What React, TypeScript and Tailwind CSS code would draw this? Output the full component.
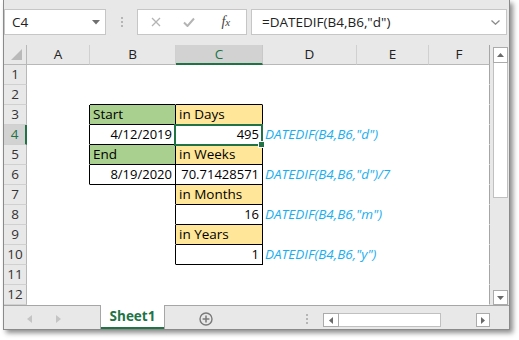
import React from "react";

type C = {
  t?: string;
  r?: boolean;
  b?: boolean;
  bg?: string;
  kind?: "l" | "n" | "f";
  sel?: boolean;
};

const colW = ["w-[63px]", "w-[86px]", "w-[87px]", "w-[94px]", "w-[72px]", "w-[61px]"];
const colNames = ["A", "B", "C", "D", "E", "F"];

const rows: Record<number, Record<number, C>> = {
  2: { 1: { b: true }, 2: { b: true } },
  3: {
    0: { r: true },
    1: { t: "Start", r: true, b: true, bg: "bg-[#a9d08e]", kind: "l" },
    2: { t: "in Days", r: true, b: true, bg: "bg-[#ffe699]", kind: "l" },
  },
  4: {
    0: { r: true },
    1: { t: "4/12/2019", r: true, b: true, kind: "n" },
    2: { t: "495", r: true, b: true, kind: "n", sel: true },
    3: { t: 'DATEDIF(B4,B6,"d")', kind: "f" },
  },
  5: {
    0: { r: true },
    1: { t: "End", r: true, b: true, bg: "bg-[#a9d08e]", kind: "l" },
    2: { t: "in Weeks", r: true, b: true, bg: "bg-[#ffe699]", kind: "l" },
  },
  6: {
    0: { r: true },
    1: { t: "8/19/2020", r: true, b: true, kind: "n" },
    2: { t: "70.71428571", r: true, b: true, kind: "n" },
    3: { t: 'DATEDIF(B4,B6,"d")/7', kind: "f" },
  },
  7: {
    1: { r: true },
    2: { t: "in Months", r: true, b: true, bg: "bg-[#ffe699]", kind: "l" },
  },
  8: {
    1: { r: true },
    2: { t: "16", r: true, b: true, kind: "n" },
    3: { t: 'DATEDIF(B4,B6,"m")', kind: "f" },
  },
  9: {
    1: { r: true },
    2: { t: "in Years", r: true, b: true, bg: "bg-[#ffe699]", kind: "l" },
  },
  10: {
    1: { r: true },
    2: { t: "1", r: true, b: true, kind: "n" },
    3: { t: 'DATEDIF(B4,B6,"y")', kind: "f" },
  },
};

function Cell({ ci, c }: { ci: number; c?: C }) {
  const isLast = ci === 5;
  const rCls = isLast ? "border-r-[#a6a6a6]" : c?.r ? "border-r-black" : "border-r-transparent";
  const bCls = c?.b ? "border-b-black" : "border-b-transparent";
  const kindCls =
    c?.kind === "n"
      ? "text-right pr-[3px] text-black text-[13px]"
      : c?.kind === "l"
      ? "text-left pl-[3px] text-black text-[13.5px]"
      : c?.kind === "f"
      ? "text-left pl-[2px] italic text-[#1aaef0] text-[13.5px]"
      : "text-[13px]";
  return (
    <div
      className={`${colW[ci]} h-[20px] shrink-0 box-border border-r border-b ${rCls} ${bCls} ${c?.bg ?? ""} ${kindCls} leading-[19px] whitespace-nowrap relative`}
    >
      {c?.t}
      {c?.sel && (
        <div className="absolute left-[-2px] top-[-1px] w-[89px] h-[22px] border-2 border-[#217346] z-10">
          <div className="absolute right-[-4px] bottom-[-4px] w-[5px] h-[5px] bg-[#217346] border border-white box-content" />
        </div>
      )}
    </div>
  );
}

export default function App() {
  return (
    <div className="w-[519px] h-[340px] bg-white overflow-hidden pl-[3px] font-['Open_Sans','Liberation_Sans',sans-serif]">
      <div className="w-[507px] h-[330px] border-l border-r border-b border-[#8a8a8a] bg-[#e8e8e8] flex flex-col shadow-[3px_3px_5px_rgba(0,0,0,0.45)] box-border">
        {/* Formula bar */}
        <div className="h-[45px] shrink-0 flex items-start pt-[9px]">
          <div className="w-[102px] h-[26px] bg-white border border-[#c6c6c6] flex items-center pl-[7px] pr-[5px] justify-between box-border">
            <span className="text-[13.5px] text-[#222]">C4</span>
            <svg width="8" height="5" viewBox="0 0 8 5">
              <path d="M0 0 L8 0 L4 4.5 Z" fill="#6f6f6f" />
            </svg>
          </div>
          <div className="w-[31px] h-[26px] flex flex-col items-center justify-center gap-[2px]">
            <div className="w-[2px] h-[2px] bg-[#b5b5b5]" />
            <div className="w-[2px] h-[2px] bg-[#b5b5b5]" />
            <div className="w-[2px] h-[2px] bg-[#b5b5b5]" />
          </div>
          <div className="w-[110px] h-[26px] bg-white border border-[#c6c6c6] flex items-center pl-[2px] box-border">
            <div className="w-[34px] flex justify-center">
              <svg width="10" height="10" viewBox="0 0 10 10">
                <path d="M1 1 L9 9 M9 1 L1 9" stroke="#b4b4b4" strokeWidth="1.3" />
              </svg>
            </div>
            <div className="w-[34px] flex justify-center">
              <svg width="12" height="10" viewBox="0 0 12 10">
                <path d="M1 5.5 L4.5 9 L11 1.5" stroke="#b4b4b4" strokeWidth="2" fill="none" />
              </svg>
            </div>
            <div className="w-[42px] flex justify-center">
              <span className="font-['Liberation_Serif',serif] italic text-[14px] text-[#444] leading-none">
                f<span className="text-[11px]">x</span>
              </span>
            </div>
          </div>
          <div className="w-[256px] h-[26px] ml-[4px] bg-white border border-[#c6c6c6] flex items-center pl-[10px] pr-[6px] justify-between box-border">
            <span className="text-[13.5px] text-[#222]">=DATEDIF(B4,B6,"d")</span>
            <svg width="9" height="5" viewBox="0 0 9 5">
              <path d="M0.5 0.5 L4.5 4.2 L8.5 0.5" stroke="#8a8a8a" strokeWidth="1.3" fill="none" />
            </svg>
          </div>
        </div>

        {/* Grid + vertical scrollbar */}
        <div className="flex h-[260px] shrink-0">
          <div className="w-[486px] flex flex-col bg-white">
            {/* Column header */}
            <div className="flex h-[20px] bg-[#e8e8e8]">
              <div className="w-[23px] h-[20px] box-border border-r border-b border-[#b8b8b8] relative">
                <svg width="23" height="20" viewBox="0 0 23 20" className="absolute left-0 top-0">
                  <path d="M18 4 L18 15 L7 15 Z" fill="#b9b9b9" />
                </svg>
              </div>
              {colNames.map((n, i) =>
                i === 2 ? (
                  <div
                    key={n}
                    className={`${colW[i]} h-[20px] box-border border-r border-r-[#c8c8c8] border-b-2 border-b-[#217346] bg-[#d2d2d2] text-center text-[13.5px] leading-[19px] text-[#217346]`}
                  >
                    {n}
                  </div>
                ) : (
                  <div
                    key={n}
                    className={`${colW[i]} h-[20px] box-border border-r ${i === 5 ? "border-r-[#a6a6a6]" : "border-r-[#d0d0d0]"} border-b border-b-[#b8b8b8] text-center text-[13.5px] leading-[19px] text-[#222]`}
                  >
                    {n}
                  </div>
                )
              )}
            </div>
            {Array.from({ length: 12 }, (_, k) => k + 1).map((r) => (
              <div key={r} className="flex h-[20px]">
                {r === 4 ? (
                  <div className="w-[23px] h-[20px] shrink-0 box-border border-r-2 border-r-[#217346] border-b border-b-[#d0d0d0] bg-[#d2d2d2] text-center text-[13.5px] leading-[19px] text-[#217346]">
                    {r}
                  </div>
                ) : (
                  <div className="w-[23px] h-[20px] shrink-0 box-border border-r border-r-[#b8b8b8] border-b border-b-[#d0d0d0] bg-[#e8e8e8] text-center text-[13.5px] leading-[19px] text-[#333]">
                    {r}
                  </div>
                )}
                {colNames.map((_, ci) => (
                  <Cell key={ci} ci={ci} c={rows[r]?.[ci]} />
                ))}
              </div>
            ))}
          </div>
          {/* vertical scrollbar */}
          <div className="w-[19px] flex flex-col pl-[3px] pt-[2px] box-border">
            <div className="w-[15px] h-[16px] bg-white border border-[#ababab] flex items-center justify-center box-border">
              <svg width="7" height="4" viewBox="0 0 7 4">
                <path d="M0 4 L7 4 L3.5 0 Z" fill="#6a6a6a" />
              </svg>
            </div>
            <div className="w-[15px] h-[135px] bg-white border border-[#c0c0c0] border-t-0 box-border" />
            <div className="flex-1" />
            <div className="w-[15px] h-[15px] bg-white border border-[#ababab] flex items-center justify-center box-border">
              <svg width="7" height="4" viewBox="0 0 7 4">
                <path d="M0 0 L7 0 L3.5 4 Z" fill="#6a6a6a" />
              </svg>
            </div>
          </div>
        </div>

        {/* Tab bar */}
        <div className="flex h-[24px] shrink-0">
          <div className="w-[96px] h-full border-t border-[#a6a6a6] box-border flex items-center">
            <svg width="5" height="8" viewBox="0 0 5 8" className="ml-[23px] mt-[2px]">
              <path d="M5 0 L5 8 L0 4 Z" fill="#c4c4c4" />
            </svg>
            <svg width="5" height="8" viewBox="0 0 5 8" className="ml-[24px] mt-[2px]">
              <path d="M0 0 L0 8 L5 4 Z" fill="#c4c4c4" />
            </svg>
          </div>
          <div className="w-[65px] h-full bg-white border-l border-r border-[#a6a6a6] box-border flex flex-col">
            <div className="flex-1 flex items-center justify-center text-[13.5px] font-bold text-[#217346]">Sheet1</div>
            <div className="h-[2px] bg-[#217346]" />
          </div>
          <div className="flex-1 h-full border-t border-[#a6a6a6] box-border flex items-start">
            <svg width="14" height="14" viewBox="0 0 14 14" className="ml-[34px] mt-[6px]">
              <circle cx="7" cy="7" r="6" stroke="#7a7a7a" strokeWidth="1.4" fill="none" />
              <path d="M7 3.6 L7 10.4 M3.6 7 L10.4 7" stroke="#7a7a7a" strokeWidth="1.5" />
            </svg>
            <div className="ml-[93px] mt-[8px] flex flex-col gap-[2px]">
              <div className="w-[2px] h-[2px] bg-[#b5b5b5]" />
              <div className="w-[2px] h-[2px] bg-[#b5b5b5]" />
              <div className="w-[2px] h-[2px] bg-[#b5b5b5]" />
            </div>
            <div className="ml-[15px] mt-[7px] w-[167px] h-[14px] flex">
              <div className="w-[16px] h-full bg-white border border-[#ababab] flex items-center justify-center box-border">
                <svg width="4" height="7" viewBox="0 0 4 7">
                  <path d="M4 0 L4 7 L0 3.5 Z" fill="#6a6a6a" />
                </svg>
              </div>
              <div className="w-[102px] h-full bg-white border border-[#c0c0c0] border-l-0 box-border" />
              <div className="flex-1" />
              <div className="w-[14px] h-full bg-white border border-[#ababab] flex items-center justify-center box-border">
                <svg width="4" height="7" viewBox="0 0 4 7">
                  <path d="M0 0 L0 7 L4 3.5 Z" fill="#6a6a6a" />
                </svg>
              </div>
            </div>
          </div>
        </div>
      </div>
    </div>
  );
}
